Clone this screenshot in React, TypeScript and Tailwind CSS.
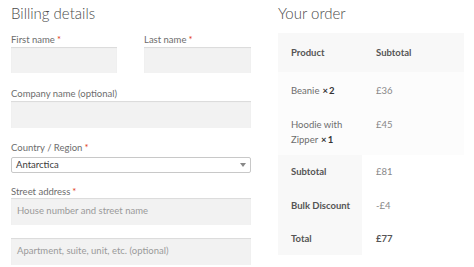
const font = { fontFamily: 'Lato, "Open Sans", sans-serif' }

function Label({ text, required }: { text: string; required?: boolean }) {
  return (
    <div className="h-[12px] text-[9.5px] leading-[12px] text-[#6d6d6d]">
      {text}
      {required && <span className="ml-[2px] text-[#e2401c]">*</span>}
    </div>
  )
}

function Input({ placeholder, className = '' }: { placeholder?: string; className?: string }) {
  return (
    <div
      className={`flex items-center bg-[#f2f2f2] px-[6px] text-[9.5px] text-[#9a9a9a] shadow-[inset_0_1px_1px_rgba(0,0,0,0.1)] ${className}`}
    >
      {placeholder}
    </div>
  )
}

const ITEMS = [
  { name: ['Beanie'], qty: 2, price: '£36', h: 'h-[36px]' },
  { name: ['Hoodie with', 'Zipper'], qty: 1, price: '£45', h: 'h-[47px]' },
]

const TOTALS = [
  { label: 'Subtotal', value: '£81', h: 'h-[33px]', bold: false },
  { label: 'Bulk Discount', value: '-£4', h: 'h-[34px]', bold: false },
  { label: 'Total', value: '£77', h: 'h-[33px]', bold: true },
]

export default function App() {
  return (
    <div className="flex h-[267px] w-[474px] overflow-hidden bg-white pl-[11px]" style={font}>
      {/* Billing details */}
      <div className="flex w-[240px] flex-col">
        <h3 className="h-[27px] text-[15px] font-light leading-[27px] text-[#4a4a4a]">Billing details</h3>

        <div className="mt-[7px] flex gap-[27px]">
          <div className="flex w-[106px] flex-col gap-[1px]">
            <Label text="First name" required />
            <Input className="h-[26px]" />
          </div>
          <div className="flex w-[107px] flex-col gap-[1px]">
            <Label text="Last name" required />
            <Input className="h-[26px]" />
          </div>
        </div>

        <div className="mt-[15px] flex flex-col gap-[1px]">
          <Label text="Company name (optional)" />
          <Input className="h-[27px]" />
        </div>

        <div className="mt-[14px] flex flex-col gap-[3px]">
          <Label text="Country / Region" required />
          <div className="flex h-[16px] items-center justify-between rounded-[2px] border border-[#c8c8c8] bg-white pl-[4px] pr-[4px] text-[9.5px] text-[#3a3a3a]">
            <span>Antarctica</span>
            <svg width="6" height="4" viewBox="0 0 6 4">
              <path d="M0 0 L6 0 L3 4 Z" fill="#888" />
            </svg>
          </div>
        </div>

        <div className="mt-[13px] flex flex-col gap-0">
          <Label text="Street address" required />
          <Input className="h-[27px]" placeholder="House number and street name" />
        </div>

        <Input className="mt-[13px] h-[27px] shrink-0" placeholder="Apartment, suite, unit, etc. (optional)" />
      </div>

      {/* Your order */}
      <div className="ml-[27px] flex w-[186px] flex-col">
        <h3 className="h-[27px] text-[15px] font-light leading-[27px] text-[#4a4a4a]">Your order</h3>

        <div className="mt-[6px] flex flex-col text-[9.5px] leading-[15px]">
          <div className="flex h-[39px] items-center bg-[#f8f8f8] font-bold text-[#555]">
            <div className="w-[84px] pl-[13px]">Product</div>
            <div className="pl-[14px]">Subtotal</div>
          </div>

          {ITEMS.map((it) => (
            <div key={it.price} className={`flex items-center bg-[#fcfcfc] text-[#6d6d6d] ${it.h}`}>
              <div className="w-[84px] pl-[13px]">
                {it.name.map((line, i) => (
                  <div key={line}>
                    {line}
                    {i === it.name.length - 1 && (
                      <span className="ml-[3px] font-bold text-[#333]">×&thinsp;{it.qty}</span>
                    )}
                  </div>
                ))}
              </div>
              <div className="self-start pl-[14px] pt-[10px] text-[#888]" style={{ paddingTop: it.name.length > 1 ? 9 : 10.5 }}>
                {it.price}
              </div>
            </div>
          ))}

          {TOTALS.map((t) => (
            <div key={t.label} className={`flex ${t.h}`}>
              <div className="flex w-[84px] items-center bg-[#f8f8f8] pl-[13px] font-bold text-[#555]">
                {t.label}
              </div>
              <div className={`flex items-center pl-[14px] ${t.bold ? 'font-bold text-[#555]' : 'text-[#888]'}`}>
                {t.value}
              </div>
            </div>
          ))}
        </div>
      </div>
    </div>
  )
}
